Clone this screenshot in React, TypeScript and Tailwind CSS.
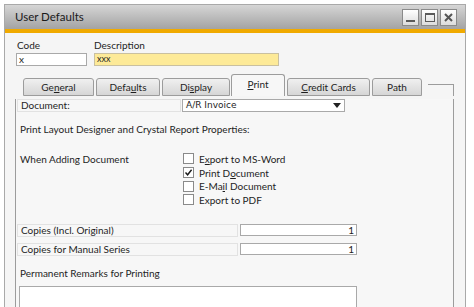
import React from "react";

const U = ({ children }: { children: React.ReactNode }) => (
  <span className="underline underline-offset-[1px] decoration-[0.5px]">{children}</span>
);

function Tab({ w, active, children }: { w: string; active?: boolean; children: React.ReactNode }) {
  if (active) {
    return (
      <div
        className={`${w} h-[22px] shrink-0 flex items-center justify-center border-t border-l border-r border-[#9c9c9c] rounded-t-[3px] bg-[#f7f7f7] text-[#1e1e1e] pb-[2px]`}
      >
        {children}
      </div>
    );
  }
  return (
    <div
      className={`${w} h-[18px] shrink-0 flex items-center justify-center border border-[#9c9c9c] rounded-t-[3px] bg-gradient-to-b from-[#f0f0f0] to-[#d6d6d6] text-[#1e1e1e]`}
    >
      {children}
    </div>
  );
}

function Check({ checked, children }: { checked?: boolean; children: React.ReactNode }) {
  return (
    <div className="h-[13.7px] flex items-center">
      <div className="w-[11px] h-[11px] border border-[#8a8a8a] bg-white flex items-center justify-center shrink-0">
        {checked && (
          <svg width="9" height="9" viewBox="0 0 9 9">
            <path d="M1.5 4.5 L3.6 6.8 L7.6 1.8" fill="none" stroke="#1a1a1a" strokeWidth="1.4" />
          </svg>
        )}
      </div>
      <span className="ml-[5px] leading-[12px]">{children}</span>
    </div>
  );
}

export default function App() {
  return (
    <div
      className="w-[474px] h-[307px] bg-white overflow-hidden"
      style={{ fontFamily: "Lato, 'Open Sans', sans-serif" }}
    >
      <div className="ml-[4px] mt-[4px] w-[462px] h-[303px] border-l border-t border-r border-[#a9a9a9] bg-[#f5f5f5] flex flex-col">
        {/* Title bar */}
        <div className="h-[24px] shrink-0 flex items-center bg-gradient-to-b from-[#d6d6d6] to-[#a3a3a3] pl-[10px] pr-[8px]">
          <span className="flex-1 text-[11.5px] text-[#1a1a1a] leading-[14px]">User Defaults</span>
          <div className="flex gap-[2px] items-center">
            <div className="w-[17px] h-[17px] border border-[#8a8a8a] bg-gradient-to-b from-[#ffffff] to-[#dcdcdc] flex items-end justify-center pb-[3px]">
              <div className="w-[9px] h-[2px] bg-[#5a5a5a]" />
            </div>
            <div className="w-[17px] h-[17px] border border-[#8a8a8a] bg-gradient-to-b from-[#ffffff] to-[#dcdcdc] flex items-center justify-center">
              <div className="w-[10px] h-[9px] border border-[#5a5a5a] border-t-2" />
            </div>
            <div className="w-[17px] h-[17px] border border-[#8a8a8a] bg-gradient-to-b from-[#ffffff] to-[#dcdcdc] flex items-center justify-center">
              <svg width="9" height="9" viewBox="0 0 9 9">
                <path d="M1 1 L8 8 M8 1 L1 8" stroke="#555" strokeWidth="2" />
              </svg>
            </div>
          </div>
        </div>
        <div className="h-[4px] shrink-0 bg-[#f0aa00]" />

        {/* Body */}
        <div className="flex-1 pl-[10px] text-[10px] text-[#1e1e1e]">
          {/* Code / Description */}
          <div className="ml-[1px] pt-[6px] flex gap-[7px]">
            <div className="flex flex-col w-[71px]">
              <span className="leading-[12px] pl-[1px]">Code</span>
              <div className="mt-[2px] h-[13px] border border-[#a9a9a9] bg-white pl-[2px] leading-[11px]">x</div>
            </div>
            <div className="flex flex-col w-[185px]">
              <span className="leading-[12px]">Description</span>
              <div className="mt-[2px] h-[13px] border border-[#c9c0a0] bg-[#fdea98] pl-[2px] leading-[10px] text-[9px]">xxx</div>
            </div>
          </div>

          {/* Tabs */}
          <div className="mt-[8px] w-[439px]">
            <div className="flex items-end h-[22px] pl-[8px]">
              <Tab w="w-[71px]">Ge<U>n</U>eral</Tab>
              <div className="w-[2px] h-[1px] shrink-0" />
              <Tab w="w-[64px]">Defa<U>u</U>lts</Tab>
              <div className="w-[2px] shrink-0" />
              <Tab w="w-[68px]">Di<U>s</U>play</Tab>
              <div className="w-[1px] shrink-0" />
              <Tab w="w-[54px]" active><U>P</U>rint</Tab>
              <div className="w-[2px] shrink-0" />
              <Tab w="w-[83px]"><U>C</U>redit Cards</Tab>
              <div className="w-[2px] shrink-0" />
              <Tab w="w-[50px]">Path</Tab>
              <div className="flex-1 h-[12px] ml-[6px] border-t border-r border-[#9c9c9c]" />
            </div>

            {/* Panel */}
            <div className="h-[220px] border-l border-r border-[#9c9c9c] bg-[#f7f7f7] pl-[1px]">
              {/* Document row */}
              <div className="mt-[3px] flex gap-[1px]">
                <div className="w-[164px] h-[13px] border border-[#e2e2e2] pl-[3px] leading-[11px]">Document:</div>
                <div className="w-[163px] h-[13px] border border-[#a9a9a9] bg-white flex items-center justify-between pl-[3px] pr-[3px]">
                  <span className="text-[9px] leading-[11px]" style={{ fontFamily: "'DejaVu Sans', sans-serif" }}>
                    A/R Invoice
                  </span>
                  <svg width="8" height="5" viewBox="0 0 8 5">
                    <path d="M0 0 H8 L4 5 Z" fill="#222" />
                  </svg>
                </div>
              </div>

              <div className="mt-[11px] pl-[3px] leading-[12px]">
                Print Layout Designer and Crystal Report Properties:
              </div>

              {/* When Adding Document */}
              <div className="mt-[17px] flex">
                <div className="w-[166px] pl-[3px] pt-[1px] leading-[12px]">When Adding Document</div>
                <div className="flex flex-col">
                  <Check>E<U>x</U>port to MS-Word</Check>
                  <Check checked>Print D<U>o</U>cument</Check>
                  <Check>E-Ma<U>i</U>l Document</Check>
                  <Check>Export to PDF</Check>
                </div>
              </div>

              {/* Copies rows */}
              <div className="mt-[17px] flex items-center gap-[2px]">
                <div className="w-[221px] h-[13px] border border-[#e2e2e2] pl-[3px] leading-[11px]">Copies (Incl. Original)</div>
                <div className="w-[117px] h-[12px] border border-[#a9a9a9] bg-white text-right pr-[2px] leading-[10px]">1</div>
              </div>
              <div className="mt-[6px] flex items-center gap-[2px]">
                <div className="w-[221px] h-[13px] border border-[#e2e2e2] pl-[3px] leading-[11px]">Copies for Manual Series</div>
                <div className="w-[117px] h-[12px] border border-[#a9a9a9] bg-white text-right pr-[2px] leading-[10px]">1</div>
              </div>

              <div className="mt-[11px] pl-[3px] leading-[12px]">Permanent Remarks for Printing</div>
              <div className="mt-[7px] ml-[2px] w-[338px] h-[40px] border border-[#a9a9a9] bg-white" />
            </div>
          </div>
        </div>
      </div>
    </div>
  );
}
